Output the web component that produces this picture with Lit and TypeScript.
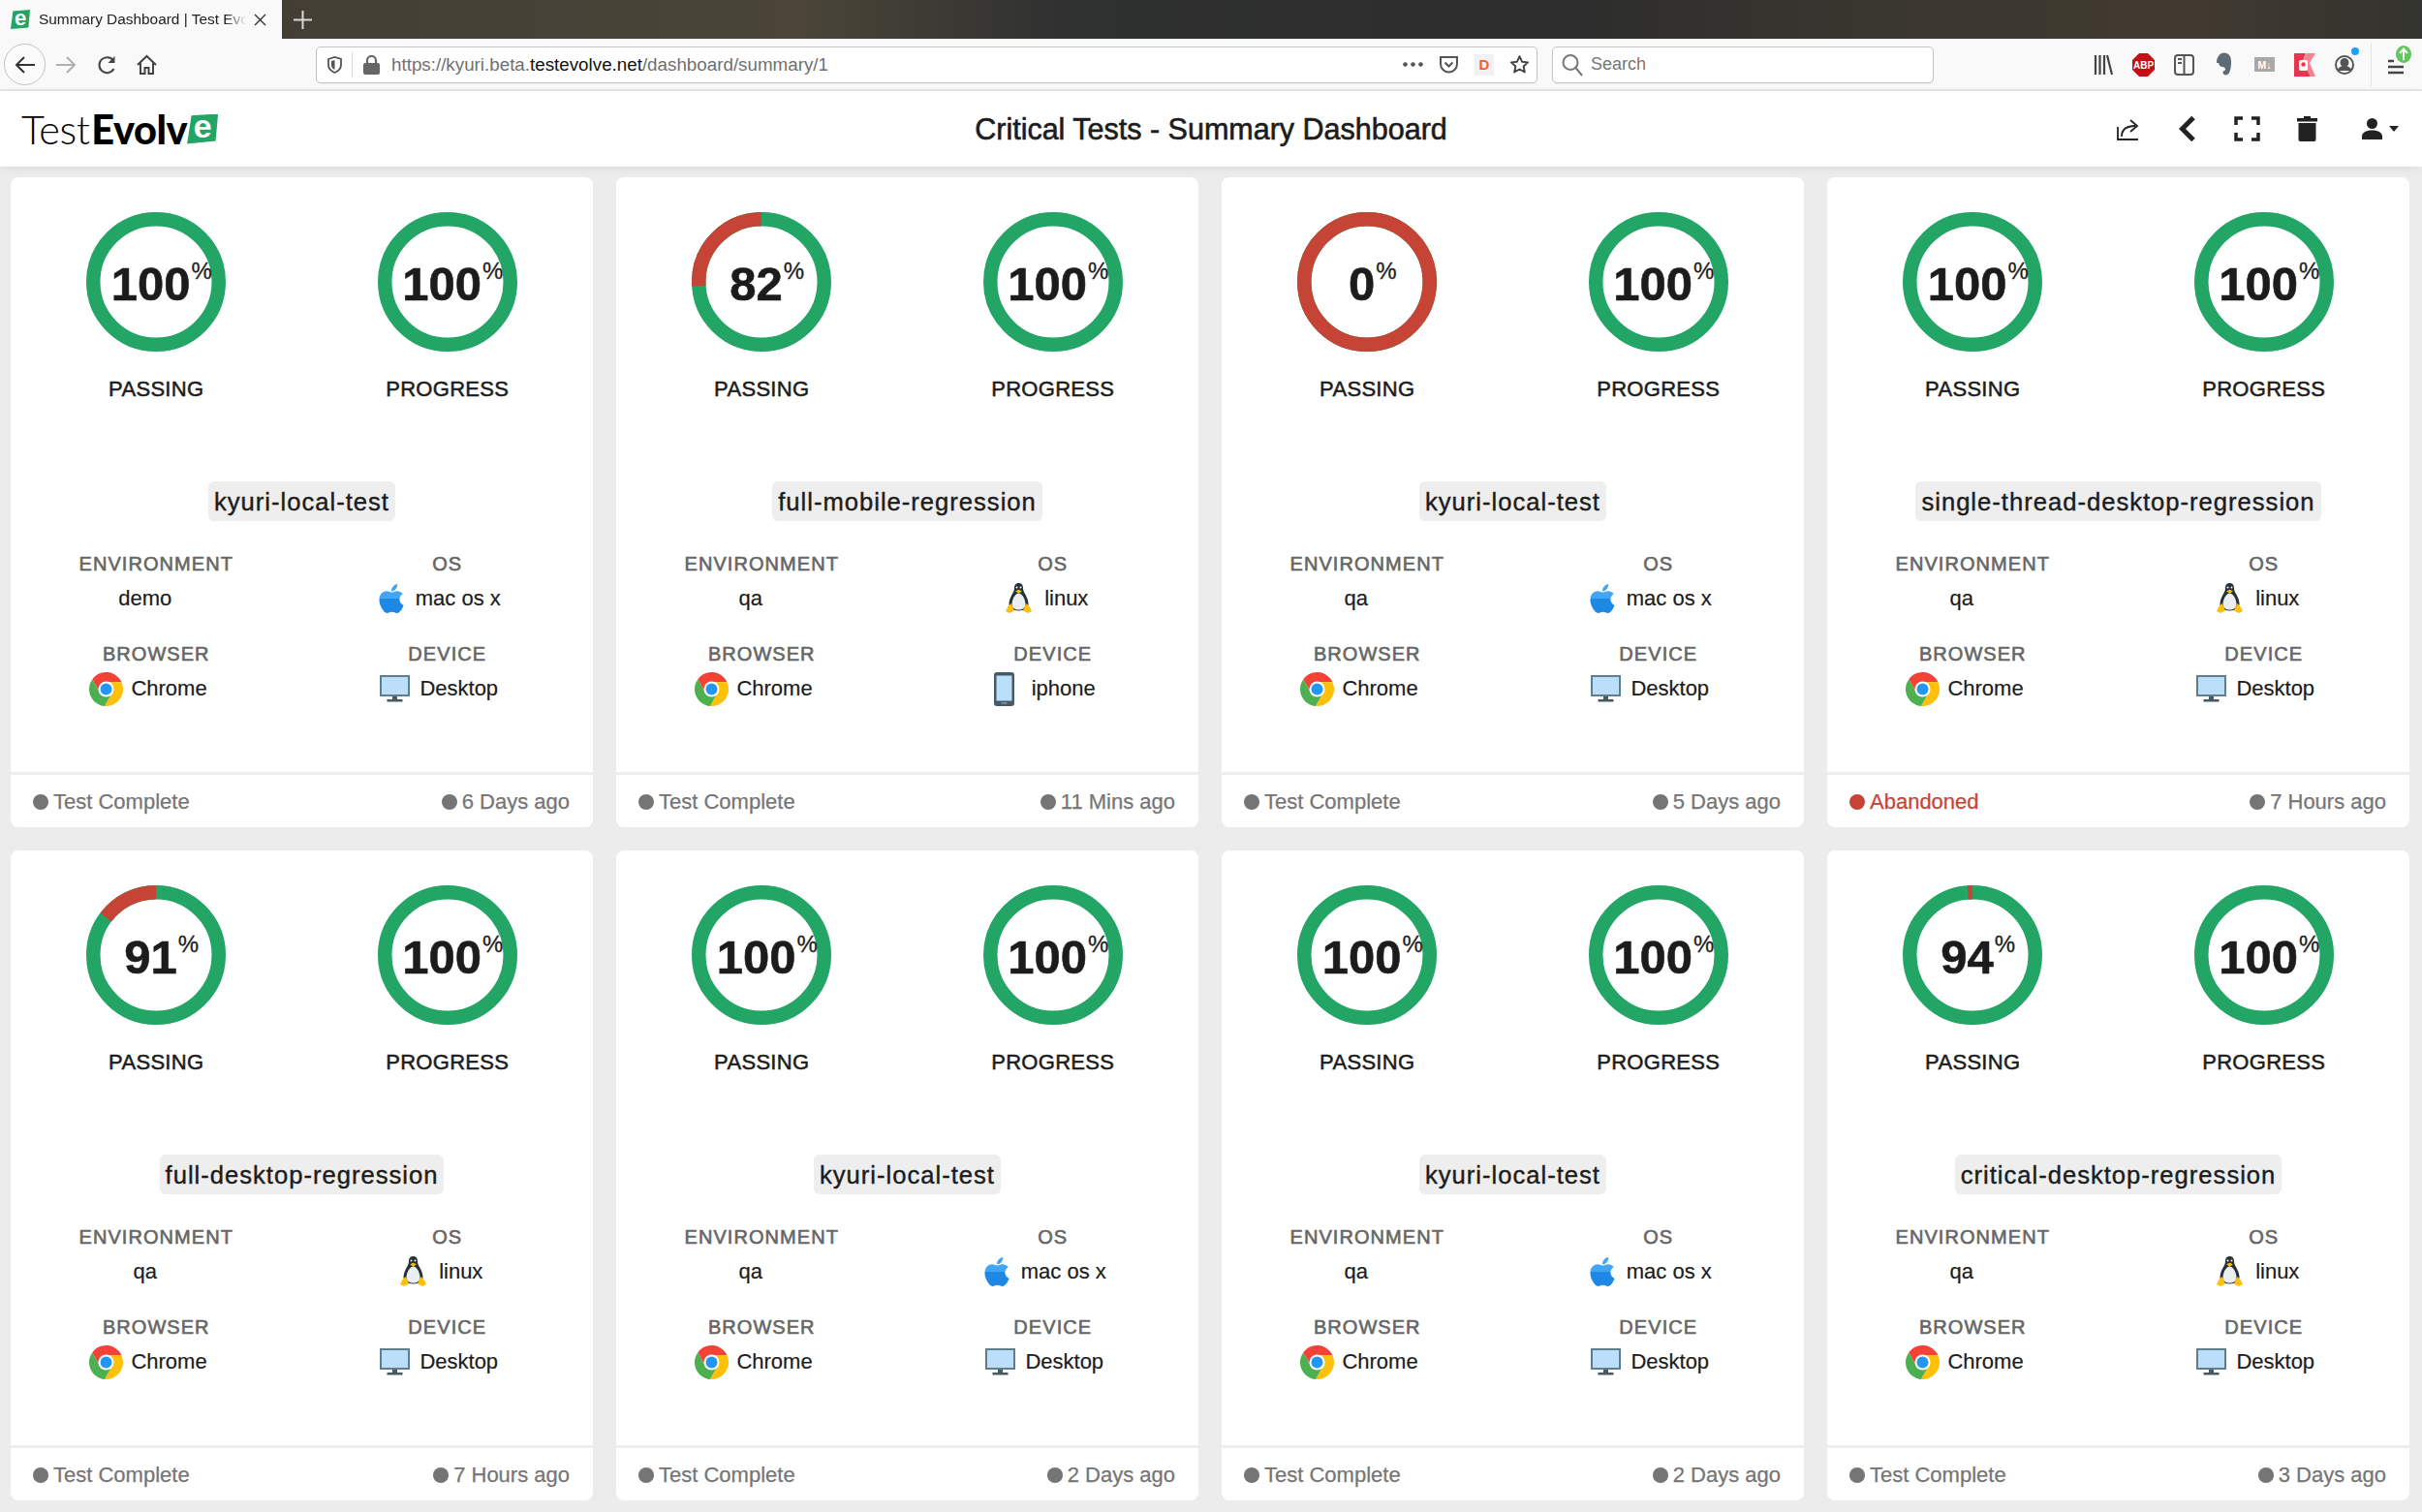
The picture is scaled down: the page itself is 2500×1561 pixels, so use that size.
import { LitElement, html, css, svg } from "lit";
import { customElement } from "lit/decorators.js";

const chrome = html`<svg class="ico chrome" width="35" height="35" viewBox="0 0 48 48"><path fill="#f44336" d="M4.44 10.12A24 24 0 0 1 45.8 14L24 14 24 24 15.34 29Z"/><path fill="#ffc107" d="M45.8 14A24 24 0 0 1 21.76 47.88L32.66 29 24 24 24 14Z"/><path fill="#4caf50" d="M21.76 47.88A24 24 0 0 1 4.44 10.12L15.34 29 24 24 32.66 29Z"/><circle cx="24" cy="24" r="11" fill="#fff"/><circle cx="24" cy="24" r="8.2" fill="#2196f3"/></svg>`;
const apple = html`<svg class="ico" width="28" height="32" viewBox="0 0 384 480"><defs><linearGradient id="ap" x1="0" y1="0" x2="0" y2="1"><stop offset=".5" stop-color="#42a5f5"/><stop offset=".5" stop-color="#1e88e5"/></linearGradient></defs><path fill="url(#ap)" transform="translate(0 -16)" d="M318.7 268.7c-.2-36.7 16.4-64.4 50-84.8-18.8-26.9-47.2-41.7-84.7-44.6-35.5-2.8-74.3 20.7-88.5 20.7-15 0-49.4-19.7-76.4-19.7C63.3 141.2 4 184.8 4 273.5q0 39.3 14.4 81.2c12.8 36.7 59 126.7 107.2 125.2 25.2-.6 43-17.9 75.8-17.9 31.8 0 48.3 17.9 76.4 17.9 48.6-.7 90.4-82.5 102.6-119.3-65.2-30.7-61.7-90-61.7-91.9zm-56.6-164.2c27.3-32.4 24.8-61.9 24-72.5-24.1 1.4-52 16.4-67.9 34.9-17.5 19.8-27.8 44.3-25.6 71.9 26.1 2 49.9-11.4 69.5-34.3z"/></svg>`;
const linux = html`<svg class="ico tux" width="27" height="32" viewBox="0 0 27 32"><path fill="#263238" d="M13.5 0C10.4 0 9 2.3 9 5c0 2.4-.6 3.6-2 6C5 14.500 3.500 18 3.500 21.500c0 4 4 7 10 7s10-3 10-7C23.500 18 22 14.500 20 11c-1.400-2.400-2-3.600-2-6 0-2.700-1.400-5-4.500-5z"/><path fill="#eceff1" d="M13.500 10.500c-3.400 0-7 6-7 11.500 0 3.500 3 5.500 7 5.500s7-2 7-5.500c0-5.500-3.600-11.500-7-11.500z"/><path fill="#ffc107" d="M10.200 8.300l3.300-1.500 3.300 1.500-3.300 2.400z"/><circle cx="11.500" cy="4.500" r="1" fill="#fff"/><circle cx="15.500" cy="4.500" r="1" fill="#fff"/><path fill="#ffc107" d="M5.500 21 7.800 25.500 9 28.500 4 31 0 29 1.800 25zM21.500 21 19.200 25.500 18 28.500 23 31 27 29 25.200 25z"/></svg>`;
const desktop = html`<svg class="ico desk" width="31" height="28" viewBox="0 0 31 28"><rect width="31" height="22" fill="#607d8b"/><rect x="2" y="2" width="27" height="18" fill="#bbdefb"/><rect x="13" y="22" width="5" height="3" fill="#455a64"/><rect x="7.500" y="25" width="16" height="2.500" fill="#455a64"/></svg>`;
const phone = html`<svg class="ico phone" width="21" height="35" viewBox="0 0 21 35"><rect width="21" height="35" rx="3" fill="#455a64"/><rect x="2.500" y="3.500" width="16" height="26" fill="#bbdefb"/><rect x="7.500" y="31" width="6" height="1.800" fill="#78909c"/></svg>`;

const icons: Record<string, any> = { chrome, apple, linux, desktop, phone };

interface Gauge { value: number; red: number }
interface Card {
  p: number; red: number; name: string; env: string; os: "mac" | "linux"; device: "Desktop" | "iphone";
  status: string; bad?: boolean; time: string;
}
const cards: Card[] = [
  { p: 100, red: 0, name: "kyuri-local-test", env: "demo", os: "mac", device: "Desktop", status: "Test Complete", time: "6 Days ago" },
  { p: 82, red: 93.7, name: "full-mobile-regression", env: "qa", os: "linux", device: "iphone", status: "Test Complete", time: "11 Mins ago" },
  { p: 0, red: 360, name: "kyuri-local-test", env: "qa", os: "mac", device: "Desktop", status: "Test Complete", time: "5 Days ago" },
  { p: 100, red: 0, name: "single-thread-desktop-regression", env: "qa", os: "linux", device: "Desktop", status: "Abandoned", bad: true, time: "7 Hours ago" },
  { p: 91, red: 53, name: "full-desktop-regression", env: "qa", os: "linux", device: "Desktop", status: "Test Complete", time: "7 Hours ago" },
  { p: 100, red: 0, name: "kyuri-local-test", env: "qa", os: "mac", device: "Desktop", status: "Test Complete", time: "2 Days ago" },
  { p: 100, red: 0, name: "kyuri-local-test", env: "qa", os: "mac", device: "Desktop", status: "Test Complete", time: "2 Days ago" },
  { p: 94, red: 4.2, name: "critical-desktop-regression", env: "qa", os: "linux", device: "Desktop", status: "Test Complete", time: "3 Days ago" },
];

function ring(g: Gauge) {
  return html`<svg class="ring" width="144" height="144" viewBox="0 0 144 144">
    <circle cx="72" cy="72" r="64.750" fill="none" stroke="#22a565" stroke-width="14.500"/>
    ${g.red > 0
      ? svg`<circle cx="72" cy="72" r="64.750" fill="none" stroke="#c64436" stroke-width="14.500" pathLength="360" stroke-dasharray="${g.red} 360" transform="rotate(${-90 - g.red} 72 72)"/>`
      : ""}
  </svg>`;
}

@customElement("app-root")
export class AppRoot extends LitElement {
  static styles = css`
    :host { display: block; width: 2500px; height: 1561px; overflow: hidden; background: #ececec; font-family: "Liberation Sans", Arial, sans-serif; color: #1c1c1c; }
    svg { display: block; flex: none; }
    .tabs { height: 40px; display: flex; align-items: stretch; background: linear-gradient(90deg, #3f3b33 0%, #4a4538 33%, #2f3030 44%, #2d2d2d 65%, #3a372f 78%, #413a30 90%, #33332f 100%); }
    .tab { width: 291px; background: #f9f9f9; display: flex; align-items: center; padding-left: 11px; box-sizing: border-box; }
    .fav { width: 20px; height: 20px; background: #22a565; clip-path: polygon(12% 8%, 100% 0, 92% 92%, 0 100%); color: #fff; font-weight: 700; font-size: 22px; line-height: 17px; text-align: center; }
    .tabtitle { margin-left: 9px; width: 214px; font-size: 15.400px; white-space: nowrap; overflow: hidden; color: #222; -webkit-mask-image: linear-gradient(90deg, #000 90%, transparent 100%); mask-image: linear-gradient(90deg, #000 90%, transparent 100%); }
    .tabx { margin-left: 8px; }
    .plus { margin-left: 12px; align-self: center; }
    .toolbar { height: 51px; padding-top: 1px; background: #f9f9f9; border-bottom: 2px solid #e6e6e6; display: flex; align-items: center; padding-left: 4px; box-sizing: content-box; }
    .backbtn { width: 41px; height: 41px; border: 1px solid #c2c2c2; border-radius: 50%; display: flex; align-items: center; justify-content: center; background: #fbfbfb; }
    .fwd { margin-left: 11px; }
    .reload { margin-left: 20px; }
    .home { margin-left: 21px; }
    .field { height: 36px; border: 1.500px solid #c4c4c4; border-radius: 5px; background: #fff; display: flex; align-items: center; box-sizing: content-box; box-shadow: 0 1px 1px rgba(0,0,0,.05); }
    .url { margin-left: 164px; width: 1259px; }
    .shield { margin-left: 11px; }
    .sep { width: 1px; height: 26px; background: #d8d8d8; margin-left: 10px; }
    .lock { margin-left: 11px; }
    .urltext { margin-left: 12px; font-size: 18.800px; color: #707070; white-space: nowrap; flex: 1; }
    .urltext b { font-weight: 400; color: #111; }
    .more { margin-right: 16px; }
    .pocket { margin-right: 16px; }
    .dtile { width: 20px; height: 22px; background: #f1f1f1; color: #ff5a36; font-weight: 700; font-size: 15px; line-height: 22px; text-align: center; margin-right: 16px; }
    .star { margin-right: 7px; }
    .search { margin-left: 15px; width: 392px; color: #777; font-size: 18px; }
    .search svg { margin: 0 8px 0 9px; }
    .tools { margin-left: 165px; display: flex; align-items: center; gap: 20px; height: 100%; }
    .tsep { width: 1px; height: 44px; background: #e2e2e2; margin-left: -3px; }
    .menuwrap { width: 30px; height: 40px; display: flex; align-items: flex-end; padding-bottom: 10px; box-sizing: border-box; margin-left: -3px; position: relative; }
    .update { position: absolute; left: 8px; top: 0; }
    .profile { position: relative; }
    .bluedot { position: absolute; left: 17px; top: -6px; width: 8px; height: 8px; border-radius: 50%; background: #1da1f2; }
    .appbar { height: 78px; background: #fff; display: grid; grid-template-columns: 1fr auto 1fr; align-items: center; box-shadow: 0 2px 8px rgba(0,0,0,.07); position: relative; }
    .logo { margin-left: 22px; display: flex; align-items: center; color: #000; font-family: Lato, "Liberation Sans", sans-serif; font-size: 41.500px; line-height: 44px; letter-spacing: -0.500px; }
    .logo .l { font-weight: 300; }
    .logo .b { font-weight: 900; margin-left: 2px; }
    .etile { width: 32px; height: 31px; background: #22a565; clip-path: polygon(14% 6%, 100% 0, 92% 90%, 0 100%); color: #fff; font-weight: 900; font-size: 34px; line-height: 24px; text-align: center; font-family: "Liberation Sans", sans-serif; letter-spacing: 0; }
    .title { font-size: 30.500px; -webkit-text-stroke: .6px #1c1c1c; color: #1c1c1c; text-align: center; }
    .actions { display: flex; align-items: center; justify-content: flex-end; padding-right: 24px; }
    .a1 { margin-right: 41px; }
    .a2 { margin-right: 40px; }
    .a3 { margin-right: 38px; }
    .a4 { margin-right: 46px; }
    .a5 { margin-right: 7px; }
    .grid { padding: 11px 13px 0 11px; display: grid; grid-template-columns: repeat(4, 601px); grid-auto-rows: 671px; gap: 24px; }
    .card { background: #fff; border-radius: 8px; display: flex; flex-direction: column; }
    .cols { display: grid; grid-template-columns: 1fr 1fr; }
    .gauges { padding-top: 36px; }
    .gauge { display: flex; flex-direction: column; align-items: center; }
    .dial { display: grid; width: 144px; height: 144px; }
    .dial > * { grid-area: 1 / 1; }
    .num { display: flex; justify-content: center; align-items: flex-start; padding: 47px 0 0 11px; font-weight: 700; font-size: 49px; line-height: 54px; color: #1c1c1c; white-space: nowrap; -webkit-text-stroke: .6px #1c1c1c; }
    .num sup { font-weight: 400; font-size: 24px; line-height: 28px; margin-top: 0; margin-left: 1px; -webkit-text-stroke: .3px #1c1c1c; }
    .glabel { margin-top: 26px; font-size: 22px; line-height: 26px; letter-spacing: .3px; -webkit-text-stroke: .5px #1c1c1c; }
    .name { align-self: center; margin-top: 82px; height: 41px; line-height: 43px; padding: 0 6px; background: #eee; border-radius: 6px; font-size: 25.600px; letter-spacing: 1px; -webkit-text-stroke: .4px #1c1c1c; white-space: nowrap; }
    .meta { margin-top: 33px; row-gap: 28px; }
    .cell { display: flex; flex-direction: column; align-items: center; }
    .mlabel { font-size: 20px; line-height: 22px; letter-spacing: 1.050px; color: #666; -webkit-text-stroke: .6px #666; }
    .val { margin-top: 7px; height: 36px; display: flex; align-items: center; justify-content: center; font-size: 22px; color: #1c1c1c; padding-right: 17px; white-space: nowrap; -webkit-text-stroke: .2px #1c1c1c; }
    .val.plain { padding-right: 23px; }
    .val .ico { margin-right: 11px; }
    .val .chrome { margin-right: 8.500px; }
    .val .desk { margin-right: 10px; }
    .val .tux { margin-left: 5px; margin-right: 13px; }
    .val .phone { margin-right: 18px; }
    .foot { margin-top: auto; height: 52px; padding: 2px 24px 0 23px; border-top: 3px solid #eee; display: flex; justify-content: space-between; align-items: center; font-size: 22px; color: #757575; -webkit-text-stroke: .25px #757575; box-sizing: content-box; }
    .st { display: flex; align-items: center; }
    .dot { width: 16px; height: 16px; border-radius: 50%; background: #757575; margin-right: 5px; }
    .bad { color: #c64436; -webkit-text-stroke: .25px #c64436; }
    .bad .dot { background: #c64436; }
  `;

  gauge(label: string, g: Gauge, value: number) {
    return html`<div class="gauge">
      <div class="dial">${ring(g)}<div class="num">${value}<sup>%</sup></div></div>
      <div class="glabel">${label}</div>
    </div>`;
  }

  renderCard(c: Card) {
    const osIcon = c.os === "mac" ? icons.apple : icons.linux;
    const osName = c.os === "mac" ? "mac os x" : "linux";
    const devIcon = c.device === "Desktop" ? icons.desktop : icons.phone;
    return html`<section class="card">
      <div class="cols gauges">
        ${this.gauge("PASSING", { value: c.p, red: c.red }, c.p)}
        ${this.gauge("PROGRESS", { value: 100, red: 0 }, 100)}
      </div>
      <div class="name">${c.name}</div>
      <div class="cols meta">
        <div class="cell"><div class="mlabel">ENVIRONMENT</div><div class="val plain">${c.env}</div></div>
        <div class="cell"><div class="mlabel">OS</div><div class="val">${osIcon}${osName}</div></div>
        <div class="cell"><div class="mlabel">BROWSER</div><div class="val">${icons.chrome}Chrome</div></div>
        <div class="cell"><div class="mlabel">DEVICE</div><div class="val">${devIcon}${c.device}</div></div>
      </div>
      <div class="foot">
        <div class="st ${c.bad ? "bad" : ""}"><span class="dot"></span>${c.status}</div>
        <div class="st"><span class="dot"></span>${c.time}</div>
      </div>
    </section>`;
  }

  render() {
    return html`
      <div class="tabs">
        <div class="tab">
          <div class="fav">e</div>
          <div class="tabtitle">Summary Dashboard | Test Evol</div>
          <svg class="tabx" width="13" height="13" viewBox="0 0 13 13" stroke="#333" stroke-width="1.400" fill="none"><path d="M1 1l11 11M12 1L1 12"/></svg>
        </div>
        <svg class="plus" width="19" height="19" viewBox="0 0 19 19" stroke="#d8d8d8" stroke-width="2"><path d="M9.500 0v19M0 9.500h19"/></svg>
      </div>
      <div class="toolbar">
        <div class="backbtn"><svg width="22" height="22" viewBox="0 0 22 22" fill="none" stroke="#333" stroke-width="2"><path d="M21 11H2M10 3l-8 8 8 8"/></svg></div>
        <svg class="fwd" width="21" height="22" viewBox="0 0 21 22" fill="none" stroke="#b0b0b0" stroke-width="2"><path d="M0 11h19M11 3l8 8-8 8"/></svg>
        <svg class="reload" width="21" height="22" viewBox="0 0 21 22" fill="none" stroke="#444" stroke-width="2"><path d="M18 6.500A8 8 0 1 0 18.500 15"/><path fill="#444" stroke="none" d="M19.500 2v7h-7z"/></svg>
        <svg class="home" width="21" height="22" viewBox="0 0 21 22" fill="none" stroke="#444" stroke-width="2"><path d="M1 11 10.500 2 20 11M4 9v11h4.500v-6h4v6H17V9"/></svg>
        <div class="field url">
          <svg class="shield" width="15" height="18" viewBox="0 0 15 18" fill="none" stroke="#555" stroke-width="1.800"><path d="M1 3l6.500-2L14 3v6c0 4-3 6.500-6.500 8C4 15.500 1 13 1 9z"/><path fill="#555" stroke="none" d="M7.500 4v10c-2.500-1-3.500-3-3.500-5V5z"/></svg>
          <div class="sep"></div>
          <svg class="lock" width="17" height="20" viewBox="0 0 17 20" fill="#666"><rect y="8" width="17" height="12" rx="2"/><path d="M4 8V5.500a4.500 4.500 0 0 1 9 0V8" fill="none" stroke="#666" stroke-width="2.200"/></svg>
          <div class="urltext">https://kyuri.beta.<b>testevolve.net</b>/dashboard/summary/1</div>
          <svg class="more" width="21" height="5" viewBox="0 0 21 5" fill="#555"><circle cx="2.500" cy="2.500" r="2.300"/><circle cx="10.500" cy="2.500" r="2.300"/><circle cx="18.500" cy="2.500" r="2.300"/></svg>
          <svg class="pocket" width="21" height="20" viewBox="0 0 21 20" fill="none" stroke="#555" stroke-width="2"><path d="M2 2h17v7a8.500 8.500 0 0 1-17 0z"/><path d="M6.500 7.500 10.500 11.500 14.500 7.500"/></svg>
          <div class="dtile">D</div>
          <svg class="star" width="21" height="21" viewBox="0 0 24 24" fill="none" stroke="#444" stroke-width="2.200" stroke-linejoin="round"><path d="M12 2.500l2.900 6.300 6.900.8-5.100 4.700 1.400 6.800L12 17.700l-6.100 3.400 1.400-6.800-5.100-4.700 6.900-.8z"/></svg>
        </div>
        <div class="field search">
          <svg width="22" height="24" viewBox="0 0 22 24" fill="none" stroke="#777" stroke-width="2"><circle cx="9" cy="9.500" r="7.500"/><path d="M14.500 15 21 23"/></svg>
          Search
        </div>
        <div class="tools">
          <svg width="20" height="22" viewBox="0 0 20 22" stroke="#444" stroke-width="2.200" fill="none"><path d="M2 1v20M6.500 1v20M11 1v20M14 1l5 20"/></svg>
          <svg width="23" height="24" viewBox="0 0 23 24"><path fill="#c70d15" d="M7 0h9l7 7v10l-7 7H7l-7-7V7z"/><text x="11.500" y="16" text-anchor="middle" font-family="Liberation Sans" font-weight="700" font-size="10" fill="#fff">ABP</text></svg>
          <svg width="21" height="22" viewBox="0 0 21 22" fill="none" stroke="#555" stroke-width="2"><rect x="1" y="1" width="19" height="20" rx="3"/><path d="M10.500 1v20" stroke-width="2"/><path d="M4 5h4M4 9h4" stroke-width="2"/></svg>
          <svg width="22" height="26" viewBox="0 0 22 26" fill="#5d6b75"><path d="M5 4c1-2 3-3.500 6-3.500 4 0 7 3.500 7 8.500 0 5-.5 8.500-1.500 11-.7 2-2.500 3.500-4 3.500s-3-1-3-2.500 1-2.500 2.500-2.500c.5-1.500-.5-3-2.500-3.500C6.500 15 5.500 13 5 11H3C3 8 3.500 5.500 5 4z"/></svg>
          <svg width="21" height="15" viewBox="0 0 21 15"><rect width="21" height="15" fill="#a9a9a9"/><text x="10.500" y="12" text-anchor="middle" font-family="Liberation Sans" font-weight="700" font-size="10.500" fill="#fff">M↓</text></svg>
          <svg width="22" height="24" viewBox="0 0 22 24"><path fill="#e8344e" d="M0 0h12l-3 8 4 8 4 8H0z"/><path fill="#f7828f" d="M13 0h9l-6 10 6 14h-5l-4-8-4-8z"/><rect x="5" y="7" width="9" height="11" rx="2" fill="#fff"/><circle cx="9.500" cy="11.500" r="2.200" fill="#e8344e"/></svg>
          <div class="profile">
            <svg width="20" height="24" viewBox="0 0 20 24" fill="none" stroke="#555" stroke-width="2"><circle cx="10" cy="12" r="9"/><circle cx="10" cy="9.500" r="3.500" fill="#555"/><path d="M3.500 18c1-3.500 4-4 6.500-4s5.500.5 6.500 4" fill="#555"/></svg>
            <span class="bluedot"></span>
          </div>
          <div class="tsep"></div>
          <div class="menuwrap">
            <svg width="16" height="16" viewBox="0 0 16 16" stroke="#444" stroke-width="2.400"><path d="M0 2h6M0 8h16M0 14h16"/></svg>
            <svg class="update" width="16" height="18" viewBox="0 0 16 18"><ellipse cx="8" cy="9" rx="8" ry="9" fill="#5fc75b"/><path d="M8 15V4M4 8l4-4.500L12 8" fill="none" stroke="#fff" stroke-width="2"/></svg>
          </div>
        </div>
      </div>
      <header class="appbar">
        <div class="logo"><span class="l">Test</span><span class="b">Evolv</span><div class="etile">e</div></div>
        <div class="title">Critical Tests - Summary Dashboard</div>
        <div class="actions">
          <svg class="a1" width="23" height="23" viewBox="0 0 23 23" fill="none" stroke="#222" stroke-width="1.800"><path d="M1 9v13h21"/><path d="M5 19c0-7 4-11 14-11"/><path d="M14 2l7 6-7 6"/></svg>
          <svg class="a2" width="17" height="26" viewBox="0 0 17 26" fill="none" stroke="#222" stroke-width="5"><path d="M15 1.500 3.500 13 15 24.500"/></svg>
          <svg class="a3" width="27" height="26" viewBox="0 0 27 26" fill="none" stroke="#222" stroke-width="3.500"><path d="M9 2H2v7M18 2h7v7M9 24H2v-7M18 24h7v-7"/></svg>
          <svg class="a4" width="21" height="26" viewBox="0 0 21 26" fill="#222"><rect x="7" y="0" width="7" height="3"/><rect y="2" width="21" height="3.500"/><path d="M1.500 7h18v17a2 2 0 0 1-2 2h-14a2 2 0 0 1-2-2z"/></svg>
          <svg class="a5" width="21" height="22" viewBox="0 0 21 22" fill="#222"><circle cx="10.500" cy="5.500" r="5.500"/><path d="M0 22v-3c0-4 4-6.500 10.500-6.500S21 15 21 19v3z"/></svg>
          <svg width="10" height="6" viewBox="0 0 10 6" fill="#222"><path d="M0 0h10L5 6z"/></svg>
        </div>
      </header>
      <main class="grid">${cards.map((c) => this.renderCard(c))}</main>
    `;
  }
}
